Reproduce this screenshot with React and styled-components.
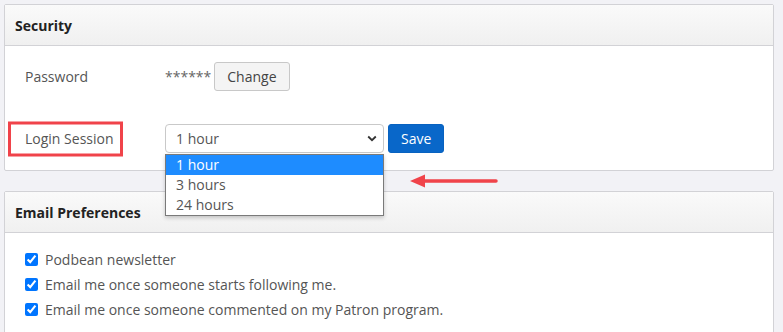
import React from "react";
import styled, { createGlobalStyle } from "styled-components";

const Global = createGlobalStyle`
  html, body { margin: 0; padding: 0; background: #f2f2f6; }
  body { font-family: "Open Sans", "Noto Sans", sans-serif; font-size: 14px; color: #555; }
`;

const Page = styled.div`
  padding: 4px 0 0 4px;
  display: flex;
  flex-direction: column;
  gap: 20px;
  width: 770px;
`;

const Panel = styled.section`
  background: #fff;
  border: 1px solid #d2d2d6;
  border-radius: 2px;
`;

const PanelHeader = styled.header`
  height: 40px;
  display: flex;
  align-items: center;
  padding: 0 10px;
  background: linear-gradient(#fafafa, #f0f0f0);
  border-bottom: 1px solid #d2d2d6;
  font-weight: 700;
  font-size: 14px;
  color: #222;
`;

const FormBody = styled.div`
  display: grid;
  grid-template-columns: 140px 1fr;
  row-gap: 33px;
  align-items: center;
  padding: 16px 20px 17px 20px;
`;

const Label = styled.div`
  position: relative;
  color: #555;
`;

const Highlight = styled.span`
  position: absolute;
  left: -17px;
  top: 50%;
  transform: translateY(-50%);
  width: 115px;
  height: 35px;
  box-sizing: border-box;
  border: 3px solid #f0434a;
`;

const Value = styled.div`
  display: flex;
  align-items: center;
  gap: 4px;
  position: relative;
`;

const Stars = styled.span`
  color: #666;
  margin-right: -1px;
`;

const Button = styled.button`
  height: 29px;
  box-sizing: border-box;
  padding: 0 12px;
  font-family: inherit;
  font-size: 14px;
  border-radius: 3px;
  cursor: pointer;
  border: 1px solid ${(p) => (p.$primary ? "#0862c0" : "#c8c8c8")};
  background: ${(p) => (p.$primary ? "#0967c9" : "#f4f4f4")};
  color: ${(p) => (p.$primary ? "#fff" : "#444")};
`;

const SelectWrap = styled.div`
  position: relative;
  width: 219px;
`;

const SelectBox = styled.div`
  height: 29px;
  box-sizing: border-box;
  border: 1px solid #c9c9c9;
  border-radius: 4px;
  background: #fff;
  display: flex;
  align-items: center;
  justify-content: space-between;
  padding: 0 6px 0 10px;
  color: #555;
`;

const DropList = styled.ul`
  position: absolute;
  left: 0;
  top: 30px;
  width: 219px;
  box-sizing: border-box;
  margin: 0;
  padding: 0;
  list-style: none;
  background: #fff;
  border: 1px solid #7a7a7a;
  box-shadow: 0 2px 4px rgba(0, 0, 0, 0.2);
  z-index: 5;
`;

const Option = styled.li`
  height: 20px;
  line-height: 20px;
  padding-left: 10px;
  color: ${(p) => (p.$active ? "#fff" : "#555")};
  background: ${(p) => (p.$active ? "#1e8cff" : "#fff")};
`;

const Arrow = styled.svg`
  position: absolute;
  left: 245px;
  top: 49px;
  z-index: 6;
`;

const CheckList = styled.div`
  display: flex;
  flex-direction: column;
  padding: 14px 20px 20px 20px;
`;

const CheckRow = styled.label`
  height: 25px;
  display: flex;
  align-items: center;
  gap: 7px;
  color: #555;
`;

const Check = styled.input`
  margin: 0;
  width: 13px;
  height: 13px;
  accent-color: #0075ff;
`;

const Chevron = () => (
  <svg width="10" height="7" viewBox="0 0 10 7">
    <path d="M1.2 1.5 L5 5.2 L8.8 1.5" fill="none" stroke="#333" strokeWidth="1.8" />
  </svg>
);

export default function App() {
  const prefs = [
    "Podbean newsletter",
    "Email me once someone starts following me.",
    "Email me once someone commented on my Patron program.",
  ];
  return (
    <>
      <Global />
      <Page>
        <Panel>
          <PanelHeader>Security</PanelHeader>
          <FormBody>
            <Label>Password</Label>
            <Value>
              <Stars>******</Stars>
              <Button>Change</Button>
            </Value>
            <Label>
              Login Session
              <Highlight />
            </Label>
            <Value>
              <SelectWrap>
                <SelectBox>
                  <span>1 hour</span>
                  <Chevron />
                </SelectBox>
                <DropList>
                  <Option $active>1 hour</Option>
                  <Option>3 hours</Option>
                  <Option>24 hours</Option>
                </DropList>
                <Arrow width="90" height="16" viewBox="0 0 90 16">
                  <path d="M14 8 L86 8" stroke="#f0434a" strokeWidth="3.5" strokeLinecap="round" />
                  <path d="M0 8 L15 1.5 L15 14.5 Z" fill="#f0434a" />
                </Arrow>
              </SelectWrap>
              <Button $primary>Save</Button>
            </Value>
          </FormBody>
        </Panel>
        <Panel>
          <PanelHeader>Email Preferences</PanelHeader>
          <CheckList>
            {prefs.map((t) => (
              <CheckRow key={t}>
                <Check type="checkbox" defaultChecked />
                {t}
              </CheckRow>
            ))}
          </CheckList>
        </Panel>
      </Page>
    </>
  );
}
